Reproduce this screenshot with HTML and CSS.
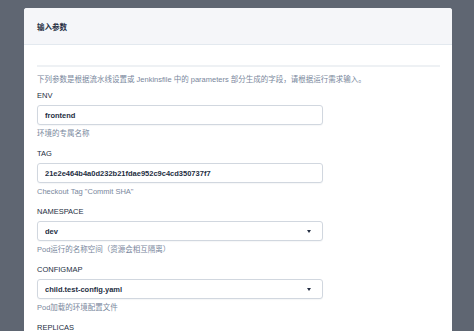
FILE: index.html
```html
<!DOCTYPE html>
<html lang="zh-CN">
<head>
  <meta charset="UTF-8">
  <meta name="viewport" content="width=device-width, initial-scale=1">
  <title>输入参数</title>
  <link rel="stylesheet" href="styles.css">
</head>
<body>
  <div class="modal">
    <!-- Header -->
    <div class="modal-header">
      <h2>输入参数</h2>
    </div>

    <div class="modal-body">
      <hr class="divider">
      <p class="desc">下列参数是根据流水线设置或 Jenkinsfile 中的 parameters 部分生成的字段，请根据运行需求输入。</p>

      <div class="field">
        <label for="env">ENV</label>
        <input type="text" id="env" value="frontend">
        <p class="hint">环境的专属名称</p>
      </div>

      <div class="field">
        <label for="tag">TAG</label>
        <input type="text" id="tag" value="21e2e464b4a0d232b21fdae952c9c4cd350737f7">
        <p class="hint">Checkout Tag "Commit SHA"</p>
      </div>

      <div class="field">
        <label for="namespace">NAMESPACE</label>
        <div class="select-wrap">
          <select id="namespace">
            <option>dev</option>
            <option>test</option>
            <option>prod</option>
          </select>
        </div>
        <p class="hint">Pod运行的名称空间（资源会相互隔离）</p>
      </div>

      <div class="field">
        <label for="configmap">CONFIGMAP</label>
        <div class="select-wrap">
          <select id="configmap">
            <option>child.test-config.yaml</option>
          </select>
        </div>
        <p class="hint">Pod加载的环境配置文件</p>
      </div>

      <div class="field">
        <label for="replicas">REPLICAS</label>
        <input type="text" id="replicas" value="1">
        <p class="hint">副本数量</p>
      </div>
    </div>
  </div>
</body>
</html>
```

FILE: styles.css
```css
/* General Styles */
* {
  margin: 0;
  padding: 0;
  box-sizing: border-box;
  font-family: 'Liberation Sans', 'Noto Sans CJK SC', sans-serif;
}

body {
  background-color: #5f6672;
  color: #242e42;
  font-size: 7.5px;
  padding: 8px 22px 0 24px;
}

/* Modal */
.modal {
  background: #ffffff;
  border-radius: 3px 3px 0 0;
  width: 428px;
  overflow: hidden;
}

.modal-header {
  background-color: #f5f6f9;
  border-bottom: 1px solid #e3e9ef;
  height: 37px;
  padding: 0 13px;
  display: flex;
  align-items: center;
}

.modal-header h2 {
  font-size: 7.5px;
  font-weight: 700;
  color: #242e42;
  margin-top: 1px;
}

.modal-body {
  padding: 20px 12px 0 13px;
}

.divider {
  border: none;
  height: 2px;
  background-color: #eef1f4;
}

.desc {
  color: #79879c;
  line-height: 12px;
  margin-top: 7px;
  margin-bottom: 4px;
}

/* Fields */
.field {
  margin-bottom: 8px;
}

.field label {
  display: block;
  line-height: 12px;
  margin-bottom: 3px;
  color: #242e42;
}

.field input,
.field select {
  display: block;
  width: 286px;
  height: 20px;
  padding: 0 7px;
  border: 1px solid #d1d7df;
  border-radius: 3px;
  background: #ffffff;
  font-size: 7.5px;
  font-weight: 700;
  color: #242e42;
  box-shadow: 0 1px 1px rgba(36, 46, 66, 0.04);
  appearance: none;
  -webkit-appearance: none;
  outline: none;
}

.select-wrap {
  position: relative;
  width: 286px;
}

.select-wrap::after {
  content: "";
  position: absolute;
  right: 12px;
  top: 9px;
  border-left: 2.5px solid transparent;
  border-right: 2.5px solid transparent;
  border-top: 3px solid #242e42;
  pointer-events: none;
}

.hint {
  color: #79879c;
  line-height: 12px;
  margin-top: 3px;
}
```
